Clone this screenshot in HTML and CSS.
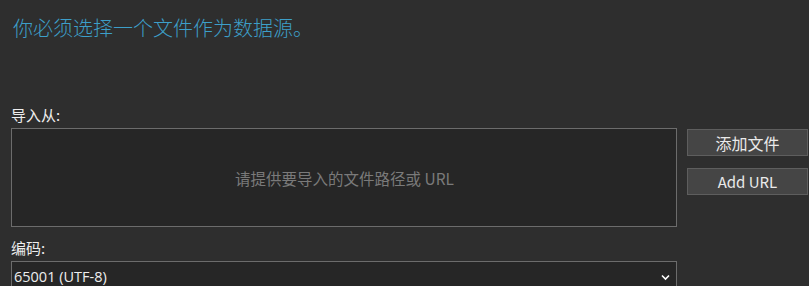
FILE: index.html
```html
<!DOCTYPE html>
<html lang="zh">
<head>
<meta charset="utf-8">
<link rel="stylesheet" href="styles.css">
</head>
<body>
<div class="page">
  <div class="title">你必须选择一个文件作为数据源。</div>
  <div class="label label-import">导入从:</div>
  <div class="import-row">
    <div class="dropbox">请提供要导入的文件路径或 URL</div>
    <div class="buttons">
      <div class="btn btn-cjk">添加文件</div>
      <div class="btn">Add URL</div>
    </div>
  </div>
  <div class="label label-enc">编码:</div>
  <div class="select">
    <span class="select-text">65001 (UTF-8)</span>
    <svg class="chev" width="9" height="7" viewBox="0 0 9 7"><polyline points="1,1.5 4.5,5 8,1.5" fill="none" stroke="#ffffff" stroke-width="1.6"/></svg>
  </div>
</div>
</body>
</html>
```
FILE: styles.css
```css
html, body {
  margin: 0;
  padding: 0;
  background: #2e2e2e;
  height: 100%;
  overflow: hidden;
}
body {
  font-family: "Open Sans", "Noto Sans CJK SC", sans-serif;
  color: #e6e6e6;
}
.page {
  padding: 17px 0 0 11px;
}
.title {
  font-family: "Noto Sans CJK SC", sans-serif;
  font-size: 20px;
  font-weight: 300;
  line-height: 22px;
  color: #3d9fc9;
  margin-left: 2px;
  height: 22px;
}
.label {
  font-family: "Noto Sans CJK SC", sans-serif;
  font-size: 15px;
  line-height: 18px;
  height: 18px;
  color: #eeeeee;
  margin-bottom: 4px;
}
.label-import {
  margin-top: 67px;
}
.label-enc {
  margin-top: 12px;
}
.import-row {
  display: flex;
  gap: 10px;
  align-items: flex-start;
}
.dropbox {
  box-sizing: border-box;
  width: 666px;
  height: 99px;
  border: 1px solid #6c6c6c;
  background: #262626;
  display: flex;
  align-items: center;
  justify-content: center;
  font-family: "Noto Sans CJK SC", sans-serif;
  font-size: 15.5px;
  color: #7a7a7a;
  padding-left: 1px;
}
.buttons {
  display: flex;
  flex-direction: column;
  gap: 12px;
  margin-top: 1px;
}
.btn {
  box-sizing: border-box;
  width: 121px;
  height: 27px;
  border: 1px solid #5e5e5e;
  background: #454545;
  display: flex;
  align-items: center;
  justify-content: center;
  font-family: "Noto Sans CJK SC", sans-serif;
  font-size: 15px;
  color: #eaeaea;
}
.btn-cjk {
  font-size: 16px;
}
.select {
  box-sizing: border-box;
  width: 666px;
  height: 28px;
  border: 1px solid #6c6c6c;
  border-bottom: none;
  background: #262626;
  display: flex;
  align-items: center;
  justify-content: space-between;
  padding: 2px 6px 0 2px;
}
.select-text {
  font-family: "Open Sans", sans-serif;
  font-size: 14.5px;
  color: #eeeeee;
}
.chev {
  display: block;
  margin-top: 2px;
}
```
